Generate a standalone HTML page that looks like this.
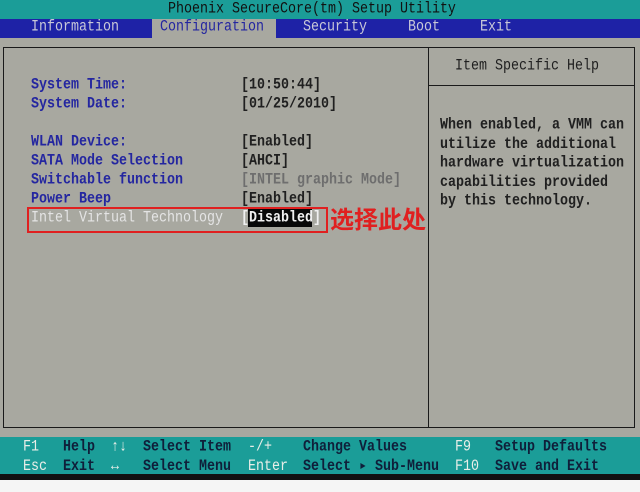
<!DOCTYPE html>
<html><head><meta charset="utf-8"><style>
*{margin:0;padding:0;box-sizing:border-box}
body{width:640px;height:492px;overflow:hidden;background:#f5f5f5;position:relative;font-family:"Liberation Mono",monospace;font-size:13.33px;font-weight:bold}
.t{position:absolute;white-space:pre;line-height:16px;transform:scaleY(1.15);transform-origin:0 0}
#title{position:absolute;left:0;top:0;width:640px;height:19px;background:#1b9d98}
#menu{position:absolute;left:0;top:19px;width:640px;height:19px;background:#1e22a6}
#tab{position:absolute;left:152px;top:19px;width:124px;height:19px;background:#a8a8a0}
#body{position:absolute;left:0;top:38px;width:640px;height:399px;background:#a8a8a0}
#box{position:absolute;left:3px;top:47px;width:632px;height:381px;border:1px solid #1a1a1a}
#div{position:absolute;left:428px;top:47px;width:1px;height:381px;background:#1a1a1a}
#hl{position:absolute;left:428px;top:85px;width:207px;height:1px;background:#1a1a1a}
#foot{position:absolute;left:0;top:437px;width:640px;height:37px;background:#1b9d98}
#blk{position:absolute;left:0;top:474px;width:640px;height:6px;background:#111}
.l{color:#2426a0}.v{color:#202020}.w{color:#e8eee8;font-weight:normal}.n{color:#0f1f3a}
.m{line-height:16.5px}
#red{position:absolute;left:27px;top:207px;width:301px;height:26px;border:2px solid #e02020}
</style></head><body>
<div id="title"></div><div id="menu"></div><div id="tab"></div><div id="body"></div>
<div id="box"></div><div id="div"></div><div id="hl"></div>
<div class="t" style="left:168px;top:1px;color:#111;font-weight:normal">Phoenix SecureCore(tm) Setup Utility</div>
<div class="t" style="left:31px;top:19px;color:#c8c8d8;font-weight:normal">Information</div>
<div class="t" style="left:160px;top:19px;color:#2426a0;font-weight:normal">Configuration</div>
<div class="t" style="left:303px;top:19px;color:#c8c8d8;font-weight:normal">Security</div>
<div class="t" style="left:408px;top:19px;color:#c8c8d8;font-weight:normal">Boot</div>
<div class="t" style="left:480px;top:19px;color:#c8c8d8;font-weight:normal">Exit</div>
<div class="t v" style="left:455px;top:58px;font-weight:normal">Item Specific Help</div>

<div class="t l" style="left:31px;top:77px">System Time:</div><div class="t v" style="left:241px;top:77px">[10:50:44]</div>
<div class="t l" style="left:31px;top:96px">System Date:</div><div class="t v" style="left:241px;top:96px">[01/25/2010]</div>
<div class="t l" style="left:31px;top:134px">WLAN Device:</div><div class="t v" style="left:241px;top:134px">[Enabled]</div>
<div class="t l" style="left:31px;top:153px">SATA Mode Selection</div><div class="t v" style="left:241px;top:153px">[AHCI]</div>
<div class="t l" style="left:31px;top:172px">Switchable function</div><div class="t" style="left:241px;top:172px;color:#6e6e6e">[INTEL graphic Mode]</div>
<div class="t l" style="left:31px;top:191px">Power Beep</div><div class="t v" style="left:241px;top:191px">[Enabled]</div>
<div class="t" style="left:31px;top:210px;color:#e4e4e4;font-weight:normal">Intel Virtual Technology</div>
<div style="position:absolute;left:248px;top:209px;width:64px;height:18px;background:#080808"></div>
<div class="t" style="left:241px;top:210px;color:#f0f0f0">[Disabled]</div>
<div id="red"></div>
<div style="position:absolute;left:330px;top:205px;color:#e02020;font-family:'Noto Sans CJK SC',sans-serif;font-size:24px;font-weight:bold;line-height:26px;white-space:nowrap">选择此处</div>

<div class="t v m" style="left:440px;top:117px">When enabled, a VMM can
utilize the additional
hardware virtualization
capabilities provided
by this technology.</div>

<div id="foot"></div><div id="blk"></div>
<div class="t w m" style="left:23px;top:439px">F1
Esc</div>
<div class="t n m" style="left:63px;top:439px">Help
Exit</div>
<div class="t w m" style="left:111px;top:439px">↑↓
↔</div>
<div class="t n m" style="left:143px;top:439px">Select Item
Select Menu</div>
<div class="t w m" style="left:248px;top:439px">-/+
Enter</div>
<div class="t n m" style="left:303px;top:439px">Change Values
Select ▸ Sub-Menu</div>
<div class="t w m" style="left:455px;top:439px">F9
F10</div>
<div class="t n m" style="left:495px;top:439px">Setup Defaults
Save and Exit</div>
</body></html>
